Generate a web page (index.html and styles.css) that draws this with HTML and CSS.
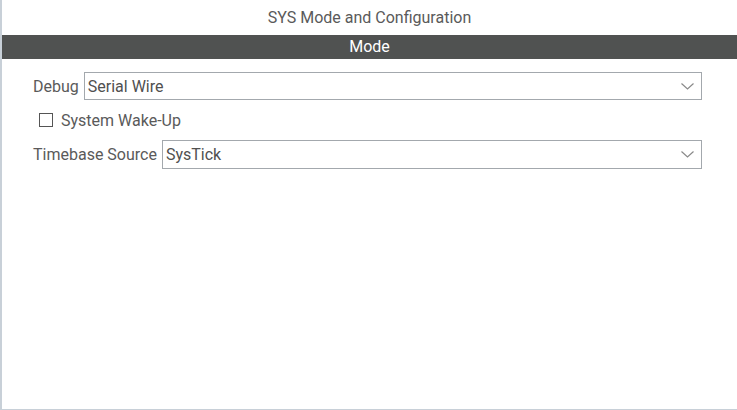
FILE: index.html
```html
<!doctype html>
<html>

<head>
  <meta charset="utf-8">
  <title>SYS Mode and Configuration</title>
  <link rel="stylesheet" href="styles.css">
</head>

<body>
  <div class="panel">
    <div class="title">SYS Mode and Configuration</div>
    <div class="bar">Mode</div>
    <div class="form">
      <div class="row">
        <label class="lbl">Debug</label>
        <div class="select">
          <span>Serial Wire</span>
          <svg class="chev" width="13" height="7" viewBox="0 0 13 7">
            <polyline points="0.5,0.5 6.5,6 12.5,0.5" fill="none" stroke="#8a8a8a" stroke-width="1.2" />
          </svg>
        </div>
      </div>
      <div class="check-row">
        <span class="box"></span>
        <span class="lbl">System Wake-Up</span>
      </div>
      <div class="row">
        <label class="lbl">Timebase Source</label>
        <div class="select tall">
          <span>SysTick</span>
          <svg class="chev" width="13" height="7" viewBox="0 0 13 7">
            <polyline points="0.5,0.5 6.5,6 12.5,0.5" fill="none" stroke="#8a8a8a" stroke-width="1.2" />
          </svg>
        </div>
      </div>
    </div>
  </div>
</body>

</html>
```

FILE: styles.css
```css
body {
  margin: 0;
  background: #fff;
  font: 16px Roboto, "Liberation Sans", Arial, sans-serif;
  color: #5a5a5a;
}

.panel {
  height: 409px;
  width: 735px;
  border-left: 2px solid #c8d0d8;
  border-right: 1px solid #c8d0d8;
  border-bottom: 1px solid #c8d0d8;
}

/* header text */
.title {
  height: 35px;
  line-height: 35px;
  text-align: center;
}

.bar {
  height: 24px;
  line-height: 24px;
  text-align: center;
  background: #505251;
  color: #fff;
}

.form {
  padding: 13px 35px 0 31px;
}

.row {
  display: flex;
  align-items: center;
}

.lbl {
  margin-right: 5px;
  white-space: nowrap;
}

.select {
  flex: 1;
  height: 26px;
  border: 1px solid #a3a8ad;
  display: flex;
  align-items: center;
  justify-content: space-between;
  padding: 0 7px 0 3px;
  color: #505050;
}

.select.tall {
  height: 27px;
}

.check-row {
  display: flex;
  align-items: center;
  height: 40px;
  padding-left: 6px;
}

.box {
  width: 12px;
  height: 12px;
  border: 1px solid #555;
  margin-right: 8px;
}
```
